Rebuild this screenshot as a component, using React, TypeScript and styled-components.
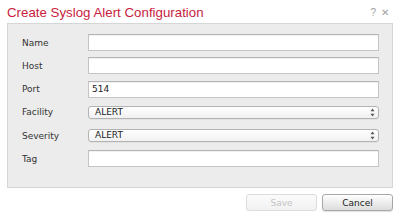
import React from "react";
import styled, { createGlobalStyle } from "styled-components";

const Global = createGlobalStyle`
  html, body { margin: 0; padding: 0; background: #fff; }
  body { font-family: "DejaVu Sans", Verdana, sans-serif; }
  * { box-sizing: border-box; }
`;

const Dialog = styled.div`
  width: 400px;
  height: 217px;
  padding: 0 7px;
  display: flex;
  flex-direction: column;
`;

const Header = styled.div`
  height: 23px;
  display: flex;
  align-items: center;
  justify-content: space-between;
`;

const Title = styled.h1`
  margin: 0;
  font-family: "Liberation Sans", Arial, sans-serif;
  font-weight: normal;
  font-size: 13.3px;
  color: #c81d40;
  padding-top: 1px;
`;

const HeaderIcons = styled.div`
  display: flex;
  gap: 5px;
  color: #a0a0a0;
  font-family: "Liberation Sans", Arial, sans-serif;
  font-size: 10px;
  padding-right: 4px;
  padding-top: 2px;
`;

const Panel = styled.div`
  height: 165px;
  background: #ececec;
  border: 1px solid #d6d6d6;
  padding: 10px 13px 0 13px;
  display: grid;
  grid-template-columns: 67px 1fr;
  grid-auto-rows: 17px;
  row-gap: 6.3px;
  align-items: center;
`;

const Label = styled.label`
  font-size: 9px;
  color: #333;
  padding-left: 1px;
`;

const TextInput = styled.input`
  display: block;
  height: 17px;
  width: 100%;
  border: 1px solid #c4c4c4;
  border-top-color: #b4b4b4;
  background: #fff;
  box-shadow: inset 0 1px 1px rgba(0, 0, 0, 0.06);
  font-family: "DejaVu Sans", Verdana, sans-serif;
  font-size: 9px;
  color: #222;
  padding: 0 3px;
  outline: none;
`;

const SelectWrap = styled.div`
  position: relative;
  height: 13px;
`;

const Select = styled.select`
  display: block;
  appearance: none;
  -webkit-appearance: none;
  width: 100%;
  height: 13px;
  margin: 0;
  border: 1px solid #b3b3b3;
  border-radius: 3px;
  background: linear-gradient(#ffffff, #f1f1f1);
  box-shadow: 0 1px 0 rgba(0, 0, 0, 0.04);
  font-family: "DejaVu Sans", Verdana, sans-serif;
  font-size: 9px;
  color: #222;
  padding: 0 0 0 6px;
  line-height: 11px;
  outline: none;
`;

const Arrows = styled.svg`
  position: absolute;
  right: 4px;
  top: 2px;
  pointer-events: none;
`;

const Footer = styled.div`
  display: flex;
  justify-content: flex-end;
  gap: 5px;
  padding-top: 6px;
`;

const Button = styled.button<{ $disabled?: boolean }>`
  width: 71px;
  height: 17px;
  border-radius: 3px;
  font-family: "DejaVu Sans", Verdana, sans-serif;
  font-size: 9px;
  padding: 0;
  border: 1px solid ${(p) => (p.$disabled ? "#dcdcdc" : "#a8a8a8")};
  color: ${(p) => (p.$disabled ? "#c4c4c4" : "#222")};
  background: ${(p) =>
    p.$disabled
      ? "linear-gradient(#fbfbfb, #f1f1f1)"
      : "linear-gradient(#ffffff, #dcdcdc)"};
  box-shadow: ${(p) => (p.$disabled ? "none" : "0 1px 1px rgba(0,0,0,0.12)")};
`;

const SelectField = ({ value }: { value: string }) => (
  <SelectWrap>
    <Select defaultValue={value}>
      <option>{value}</option>
    </Select>
    <Arrows width="5" height="9" viewBox="0 0 5 9">
      <path d="M2.5 0.5 L4.5 3.2 L0.5 3.2 Z" fill="#555" />
      <path d="M2.5 8.5 L4.5 5.8 L0.5 5.8 Z" fill="#555" />
    </Arrows>
  </SelectWrap>
);

export default function App() {
  return (
    <>
      <Global />
      <Dialog>
        <Header>
          <Title>Create Syslog Alert Configuration</Title>
          <HeaderIcons>
            <span>?</span>
            <span>✕</span>
          </HeaderIcons>
        </Header>
        <Panel>
          <Label>Name</Label>
          <TextInput />
          <Label>Host</Label>
          <TextInput />
          <Label>Port</Label>
          <TextInput defaultValue="514" />
          <Label>Facility</Label>
          <SelectField value="ALERT" />
          <Label>Severity</Label>
          <SelectField value="ALERT" />
          <Label>Tag</Label>
          <TextInput />
        </Panel>
        <Footer>
          <Button $disabled>Save</Button>
          <Button>Cancel</Button>
        </Footer>
      </Dialog>
    </>
  );
}
